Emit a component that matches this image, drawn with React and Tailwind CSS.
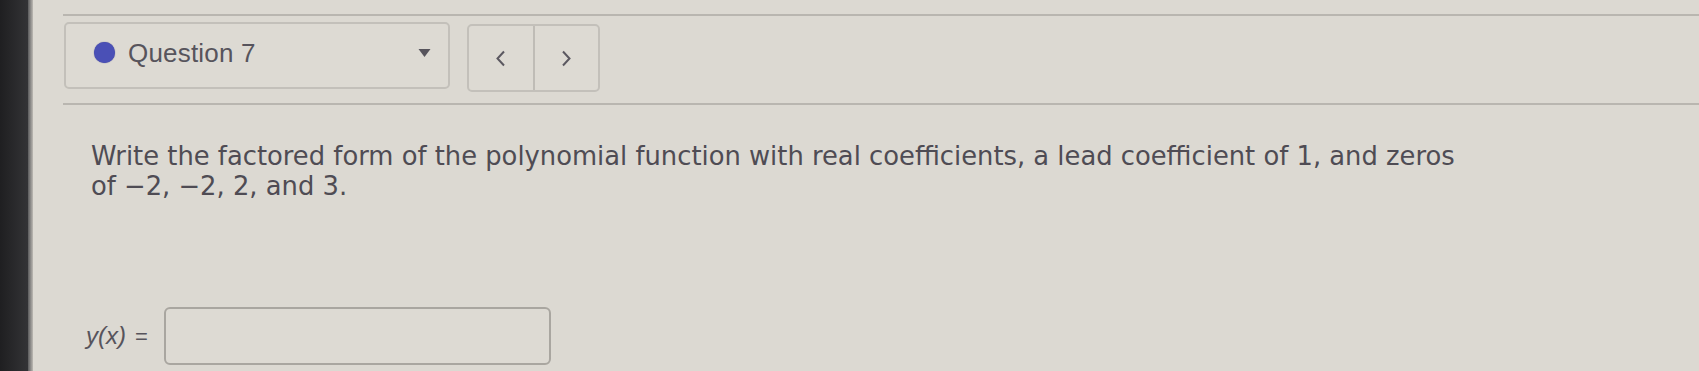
import React from "react";

export default function App() {
  return (
    <div
      className="w-full h-[371px] flex overflow-hidden bg-[#dcd9d2]"
      style={{ fontFamily: '"Liberation Sans", Arial, sans-serif' }}
    >
      <div className="w-[33px] h-full flex shrink-0">
        <div className="w-[28px] h-full bg-gradient-to-r from-[#1f1f21] to-[#333336]" />
        <div className="w-[5px] h-full bg-gradient-to-r from-[#5a5a5c] to-[#bdbab4]" />
      </div>
      <div className="flex-1 flex flex-col pl-[30px]">
        <div className="mt-[14px] border-t-2 border-b-2 border-[#b9b6b0] pt-[6px] pb-[11px] flex items-start gap-[17px] pl-[1px]">
          <div className="w-[386px] h-[67px] rounded-[5px] border-2 border-[#c3c0ba] bg-[#dddad3] flex items-center pl-[28px] pr-[17px] pb-[6px]">
            <span className="w-[21px] h-[21px] rounded-full bg-[#4a50b6] shadow-[0_0_1px_#3a3e8a]" />
            <span className="ml-[13px] text-[26px] text-[#57545c] leading-none tracking-[0.2px]">Question 7</span>
            <svg className="ml-auto" width="13" height="10" viewBox="0 0 13 10">
              <path d="M0.5 1 L12.5 1 L6.5 9 Z" fill="#57545c" />
            </svg>
          </div>
          <div className="mt-[2px] w-[133px] h-[68px] rounded-[5px] border-2 border-[#c3c0ba] bg-[#dddad3] flex">
            <div className="flex-1 flex items-center justify-center border-r-2 border-[#bfbcb6]">
              <svg width="11" height="17" viewBox="0 0 11 17">
                <path d="M9 1.5 L2.5 8.5 L9 15.5" fill="none" stroke="#5b5860" strokeWidth="2" />
              </svg>
            </div>
            <div className="flex-1 flex items-center justify-center">
              <svg width="11" height="17" viewBox="0 0 11 17">
                <path d="M2 1.5 L8.5 8.5 L2 15.5" fill="none" stroke="#5b5860" strokeWidth="2" />
              </svg>
            </div>
          </div>
        </div>
        <p
          className="mt-[36px] ml-[28px] w-[1385px] text-[25.8px] leading-[30px] text-[#4f4c54]"
          style={{ fontFamily: '"DejaVu Sans", Verdana, sans-serif' }}
        >
          Write the factored form of the polynomial function with real coefficients, a lead coefficient of 1, and zeros of −2, −2, 2, and 3.
        </p>
        <div className="mt-[106px] ml-[23px] flex items-center">
          <span className="text-[24px] text-[#57545c] italic">y(x)</span>
          <span className="ml-[9px] text-[22px] text-[#57545c]">=</span>
          <div className="ml-[16px] w-[387px] h-[58px] rounded-[6px] border-2 border-[#a9a6a0] bg-[#dddad3]" />
        </div>
      </div>
    </div>
  );
}
